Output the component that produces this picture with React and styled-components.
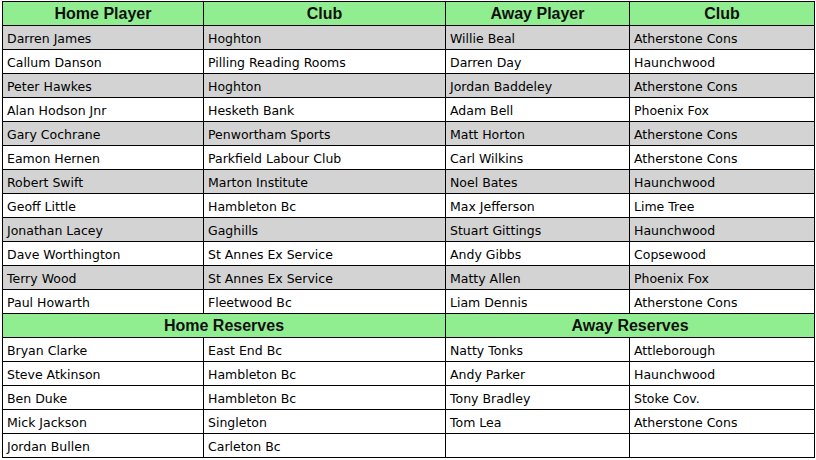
import React from "react";
import styled, { createGlobalStyle } from "styled-components";

const Global = createGlobalStyle`
  html, body { margin: 0; padding: 0; background: #fff; }
  body { padding: 1px 0 0 2px; }
`;

const Table = styled.table`
  border-collapse: collapse;
  table-layout: fixed;
  width: 812px;
  font-family: "DejaVu Sans", Verdana, sans-serif;
  font-size: 12.5px;
  color: #000;
`;

const Head = styled.th`
  background: #90ee90;
  border: 1px solid #000;
  height: 23px;
  padding: 0;
  font-family: "Liberation Sans", Arial, sans-serif;
  font-weight: bold;
  font-size: 16px;
  text-align: center;
  color: #111;
`;

const Row = styled.tr`
  background: ${(p) => (p.$shade ? "#d3d3d3" : "#fff")};
`;

const Cell = styled.td`
  border: 1px solid #000;
  height: 22px;
  padding: 1px 0 0 4px;
  white-space: nowrap;
  overflow: hidden;
`;

const main = [
  ["Darren James", "Hoghton", "Willie Beal", "Atherstone Cons"],
  ["Callum Danson", "Pilling Reading Rooms", "Darren Day", "Haunchwood"],
  ["Peter Hawkes", "Hoghton", "Jordan Baddeley", "Atherstone Cons"],
  ["Alan Hodson Jnr", "Hesketh Bank", "Adam Bell", "Phoenix Fox"],
  ["Gary Cochrane", "Penwortham Sports", "Matt Horton", "Atherstone Cons"],
  ["Eamon Hernen", "Parkfield Labour Club", "Carl Wilkins", "Atherstone Cons"],
  ["Robert Swift", "Marton Institute", "Noel Bates", "Haunchwood"],
  ["Geoff Little", "Hambleton Bc", "Max Jefferson", "Lime Tree"],
  ["Jonathan Lacey", "Gaghills", "Stuart Gittings", "Haunchwood"],
  ["Dave Worthington", "St Annes Ex Service", "Andy Gibbs", "Copsewood"],
  ["Terry Wood", "St Annes Ex Service", "Matty Allen", "Phoenix Fox"],
  ["Paul Howarth", "Fleetwood Bc", "Liam Dennis", "Atherstone Cons"],
];

const reserves = [
  ["Bryan Clarke", "East End Bc", "Natty Tonks", "Attleborough"],
  ["Steve Atkinson", "Hambleton Bc", "Andy Parker", "Haunchwood"],
  ["Ben Duke", "Hambleton Bc", "Tony Bradley", "Stoke Cov."],
  ["Mick Jackson", "Singleton", "Tom Lea", "Atherstone Cons"],
  ["Jordan Bullen", "Carleton Bc", "", ""],
];

export default function App() {
  return (
    <>
      <Global />
      <Table>
        <colgroup>
          <col style={{ width: 201 }} />
          <col style={{ width: 242 }} />
          <col style={{ width: 184 }} />
          <col style={{ width: 185 }} />
        </colgroup>
        <tbody>
          <tr>
            <Head>Home Player</Head>
            <Head>Club</Head>
            <Head>Away Player</Head>
            <Head>Club</Head>
          </tr>
          {main.map((r, i) => (
            <Row key={i} $shade={i % 2 === 0}>
              {r.map((c, j) => (
                <Cell key={j}>{c}</Cell>
              ))}
            </Row>
          ))}
          <tr>
            <Head colSpan={2}>Home Reserves</Head>
            <Head colSpan={2}>Away Reserves</Head>
          </tr>
          {reserves.map((r, i) => (
            <Row key={i}>
              {r.map((c, j) => (
                <Cell key={j}>{c}</Cell>
              ))}
            </Row>
          ))}
        </tbody>
      </Table>
    </>
  );
}
